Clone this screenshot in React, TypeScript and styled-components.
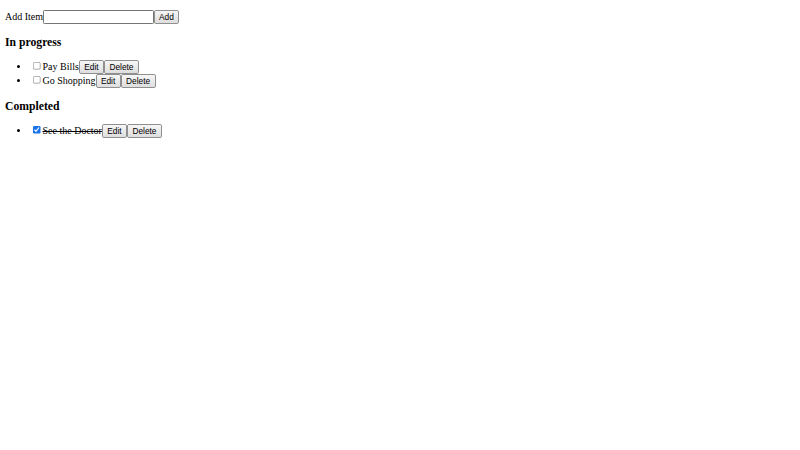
import { FC, useState } from 'react';
import styled, { createGlobalStyle } from 'styled-components';

const GlobalStyle = createGlobalStyle`
  html {
    background: #ffffff;
  }
  body {
    margin: 0;
    font-family: "Liberation Serif", "Times New Roman", serif;
    font-size: 16px;
    color: #000000;
  }
`;

// the reference is a 1280px wide page shown at 800px
const Page = styled.div`
  zoom: 0.625;
  padding: 16px 8px 8px;
`;

const AddRow = styled.p`
  margin: 0 0 16px;
  padding-bottom: 2px;
`;

const TextInput = styled.input`
  font-family: "Liberation Sans", Arial, sans-serif;
  font-size: 13.33px;
  width: 177px;
  height: 21px;
  padding: 1px 2px;
  border: 1px solid #767676;
  border-radius: 2px;
  box-sizing: border-box;
  vertical-align: baseline;
`;

const Button = styled.button`
  font-family: "Liberation Sans", Arial, sans-serif;
  font-size: 13.33px;
  padding: 1.5px 7px;
  border: 1px solid #8f8f8f;
  border-radius: 3px;
  background: linear-gradient(#f6f6f6, #dedede);
  color: #000000;
  margin: 0;
  line-height: normal;
`;

const Heading = styled.h3`
  font-size: 1.17em;
  font-weight: bold;
  margin: 18px 0 17px;
`;

const List = styled.ul`
  margin: 16px 0 20px;
  padding-left: 40px;
  list-style: disc;
`;

const Item = styled.li`
  line-height: normal;
`;

const Check = styled.input`
  width: 13px;
  height: 13px;
  margin: 3px 3px 3px 4px;
  vertical-align: baseline;
  accent-color: #1a73e8;
`;

const ItemLabel = styled.label<{ $done?: boolean }>`
  text-decoration: ${({ $done }) => ($done ? 'line-through' : 'none')};
`;

type Task = { id: number; text: string; done: boolean };

const TaskRow: FC<{ task: Task; onToggle: () => void; onDelete: () => void }> = ({
  task,
  onToggle,
  onDelete,
}) => (
  <Item>
    <Check type="checkbox" checked={task.done} onChange={onToggle} />
    <ItemLabel $done={task.done}>{task.text}</ItemLabel>
    <Button>Edit</Button>
    <Button onClick={onDelete}>Delete</Button>
  </Item>
);

export default function App() {
  const [tasks, setTasks] = useState<Task[]>([
    { id: 1, text: 'Pay Bills', done: false },
    { id: 2, text: 'Go Shopping', done: false },
    { id: 3, text: 'See the Doctor', done: true },
  ]);
  const [draft, setDraft] = useState('');

  const toggle = (id: number) =>
    setTasks(tasks.map((t) => (t.id === id ? { ...t, done: !t.done } : t)));
  const remove = (id: number) => setTasks(tasks.filter((t) => t.id !== id));
  const add = () => {
    if (!draft.trim()) return;
    setTasks([...tasks, { id: Date.now(), text: draft, done: false }]);
    setDraft('');
  };

  return (
    <>
      <GlobalStyle />
      <Page>
        <AddRow>
          <label htmlFor="new-task">Add Item</label>
          <TextInput id="new-task" type="text" value={draft} onChange={(e) => setDraft(e.target.value)} />
          <Button onClick={add}>Add</Button>
        </AddRow>

        <Heading>In progress</Heading>
        <List>
          {tasks
            .filter((t) => !t.done)
            .map((t) => (
              <TaskRow key={t.id} task={t} onToggle={() => toggle(t.id)} onDelete={() => remove(t.id)} />
            ))}
        </List>

        <Heading>Completed</Heading>
        <List>
          {tasks
            .filter((t) => t.done)
            .map((t) => (
              <TaskRow key={t.id} task={t} onToggle={() => toggle(t.id)} onDelete={() => remove(t.id)} />
            ))}
        </List>
      </Page>
    </>
  );
}
